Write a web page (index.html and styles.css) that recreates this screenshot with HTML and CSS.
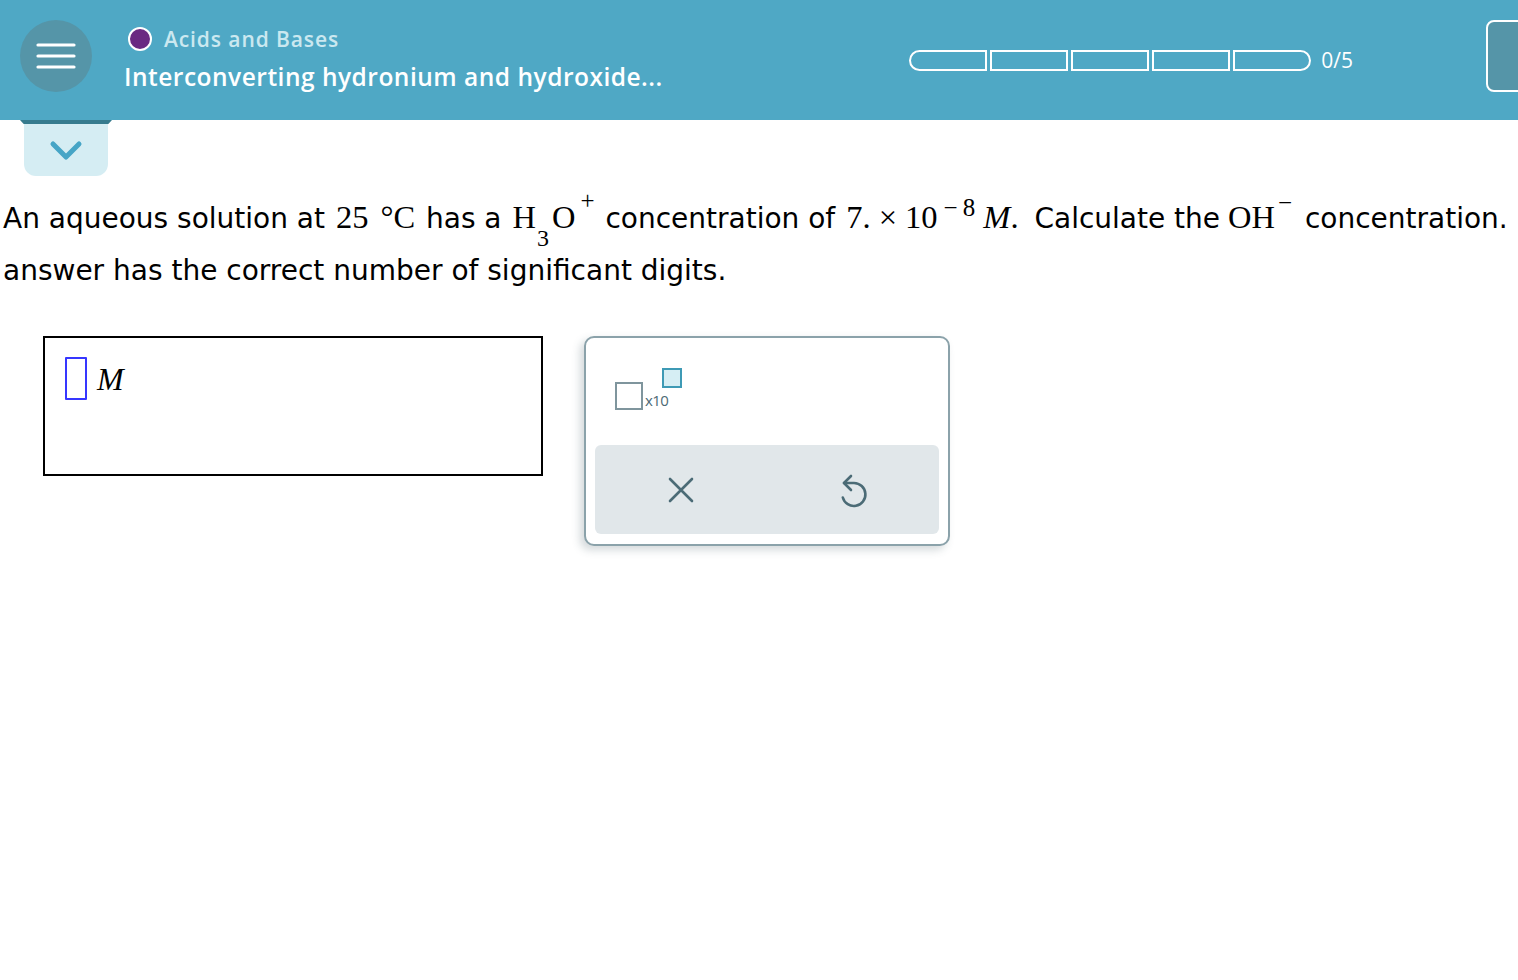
FILE: index.html
```html
<!DOCTYPE html>
<html lang="en">
<head>
<meta charset="utf-8">
<title>Interconverting hydronium and hydroxide</title>
<link rel="stylesheet" href="styles.css">
</head>
<body>
<header class="topbar">
  <button class="menu-btn" aria-label="Menu">
    <svg width="42" height="30" viewBox="0 0 42 30"><path d="M3 4H39M3 15H39M3 26H39" stroke="#fff" stroke-width="3.2" stroke-linecap="round" fill="none"/></svg>
  </button>
  <div class="titles">
    <div class="topic"><span class="dot"></span><span>Acids and Bases</span></div>
    <div class="lesson">Interconverting hydronium and hydroxide...</div>
  </div>
  <div class="progress">
    <div class="segments">
      <span class="seg first"></span><span class="seg"></span><span class="seg"></span><span class="seg"></span><span class="seg last"></span>
    </div>
    <span class="count">0/5</span>
  </div>
  <div class="side-btn"></div>
</header>

<div class="tab-area">
  <div class="tab-lip"></div>
  <div class="tab">
    <svg width="34" height="22" viewBox="0 0 34 22"><path d="M4 4L17 17L30 4" stroke="#46a5c6" stroke-width="5" stroke-linecap="round" stroke-linejoin="round" fill="none"/></svg>
  </div>
</div>

<main class="content">
  <p class="q">An aqueous solution at <span class="m">25<span class="deg">°C</span></span> has a <span class="m">H<span class="sub">3</span>O<span class="sup plus">+</span></span> concentration of <span class="m m-end">7. × 10<span class="sup exp"><span class="minus">−</span>8</span> <i>M</i>.</span> Calculate the <span class="m oh">OH<span class="sup neg">−</span></span> concentration.</p>
  <p class="q second">answer has the correct number of significant digits.</p>

  <div class="answer-row">
    <div class="answer-box">
      <span class="slot"></span>
      <span class="unit">M</span>
    </div>
    <div class="tools">
      <div class="tool-top">
        <div class="sci">
          <span class="sci-base"></span>
          <span class="sci-x">x10</span>
          <span class="sci-exp"></span>
        </div>
      </div>
      <div class="tool-bar">
        <button class="tool-btn clear" aria-label="Clear">
          <svg width="28" height="28" viewBox="0 0 28 28"><path d="M3 3L25 25M25 3L3 25" stroke="#4b6b76" stroke-width="2.6" stroke-linecap="round" fill="none"/></svg>
        </button>
        <button class="tool-btn undo" aria-label="Undo">
          <svg width="40" height="40" viewBox="0 0 40 40"><path d="M10 12H20A11.5 11.5 0 1 1 8.8 26.5" stroke="#4b6b76" stroke-width="2.6" stroke-linecap="round" stroke-linejoin="round" fill="none"/><path d="M17 5L10 12L17 19" stroke="#4b6b76" stroke-width="2.6" stroke-linecap="round" stroke-linejoin="round" fill="none"/></svg>
        </button>
      </div>
    </div>
  </div>
</main>
</body>
</html>
```

FILE: styles.css
```css
* { box-sizing: border-box; }

html, body {
  margin: 0;
  padding: 0;
  background: #fff;
  overflow: hidden;
}

body {
  width: 1518px;
  height: 980px;
  font-family: "DejaVu Sans", Verdana, sans-serif;
  color: #000;
}

/* ---------- header ---------- */
.topbar {
  height: 120px;
  background: #4fa8c5;
  display: flex;
  align-items: flex-start;
  overflow: hidden;
  font-family: "Open Sans", "Lato", sans-serif;
}

.menu-btn {
  width: 72px;
  height: 72px;
  margin: 20px 0 0 20px;
  border: none;
  border-radius: 50%;
  background: #5595a8;
  display: flex;
  align-items: center;
  justify-content: center;
  padding: 0;
  flex-shrink: 0;
}

.titles {
  margin: 26px 0 0 32px;
  display: flex;
  flex-direction: column;
}

.topic {
  display: flex;
  align-items: center;
  height: 26px;
  margin-left: 4px;
  font-size: 21px;
  font-weight: 600;
  letter-spacing: 0.9px;
  color: #cbe8f0;
}

.dot {
  width: 24px;
  height: 24px;
  border-radius: 50%;
  background: #6a2a82;
  border: 2px solid #fff;
  margin-right: 12px;
}

.lesson {
  margin-top: 8px;
  font-size: 24.5px;
  font-weight: 600;
  letter-spacing: 0.5px;
  color: #fff;
  white-space: nowrap;
}

.progress {
  margin: 46px 133px 0 auto;
  display: flex;
  align-items: center;
}

.segments {
  display: flex;
  gap: 3px;
}

.seg {
  width: 78px;
  height: 21px;
  border: 2px solid #fff;
}
.seg.first { border-radius: 11px 0 0 11px; }
.seg.last { border-radius: 0 11px 11px 0; }

.count {
  margin-left: 10px;
  color: #fff;
  font-size: 21px;
  font-weight: 400;
}

.side-btn {
  width: 72px;
  height: 72px;
  margin: 20px -40px 0 0;
  flex-shrink: 0;
  border: 2px solid #fff;
  border-radius: 8px;
  background: #5595a8;
}

/* ---------- collapse tab ---------- */
.tab-area {
  margin-left: 20px;
  width: 92px;
}

.tab-lip {
  height: 4px;
  background: #367b8e;
  clip-path: polygon(0 0, 100% 0, 96% 100%, 4% 100%);
}

.tab {
  margin-left: 4px;
  width: 84px;
  height: 52px;
  background: #d5edf3;
  border-radius: 0 0 12px 12px;
  display: flex;
  align-items: center;
  justify-content: center;
  padding-top: 2px;
}

/* ---------- question ---------- */
.content {
  padding-left: 3px;
}

.q {
  margin: 0;
  font-size: 28px;
  line-height: 52px;
  height: 52px;
  white-space: nowrap;
}
.q:first-child { margin-top: 15px; }
.q.second { margin-top: 2px; }

.m {
  font-family: "Liberation Serif", "Times New Roman", serif;
  font-size: 32.5px;
  position: relative;
  margin: 0 2px;
}

.m i { font-style: italic; }
.m.m-end { margin-right: 7px; }
.m.oh { margin-left: -1px; }

.deg { margin-left: 12px; }

.sub {
  font-size: 24px;
  position: relative;
  top: 18px;
  margin: 0 3px 0 1px;
}

.sup {
  font-size: 25px;
  position: relative;
}

.plus { top: -19px; margin-left: 5px; }
.exp { top: -12px; margin-left: 6px; }
.exp .minus { margin-right: 5px; }
.neg { top: -17px; margin-left: 3px; margin-right: 2px; }

/* ---------- answer area ---------- */
.answer-row {
  display: flex;
  align-items: flex-start;
  gap: 41px;
  margin: 39px 0 0 40px;
}

.answer-box {
  width: 500px;
  height: 140px;
  border: 2px solid #000;
  display: flex;
  align-items: flex-start;
  padding: 19px 0 0 20px;
}

.slot {
  width: 22px;
  height: 43px;
  border: 2px solid #3636ff;
  border-radius: 1px;
}

.unit {
  font-family: "Liberation Serif", "Times New Roman", serif;
  font-style: italic;
  font-size: 32px;
  margin: 4px 0 0 10px;
}

.tools {
  width: 366px;
  height: 210px;
  border: 2px solid #8ba2aa;
  border-radius: 10px;
  background: #fff;
  box-shadow: -4px 4px 8px rgba(60, 80, 90, 0.22);
  padding: 0 9px 10px 9px;
  display: flex;
  flex-direction: column;
}

.tool-top {
  height: 107px;
  padding: 30px 0 0 20px;
}

.sci {
  display: flex;
  align-items: flex-start;
}

.sci-base {
  width: 28px;
  height: 28px;
  border: 2.5px solid #7f959d;
  margin-top: 14px;
}

.sci-x {
  font-family: "Open Sans", "Lato", sans-serif;
  font-size: 15px;
  color: #4d6974;
  margin: 22px 0 0 2px;
  letter-spacing: -0.6px;
}

.sci-exp {
  width: 20px;
  height: 20px;
  border: 2.5px solid #3e9ab5;
  background: #d6eef4;
  margin-left: -6px;
}

.tool-bar {
  flex: 1;
  background: #e1e7ea;
  border-radius: 6px;
  display: flex;
  align-items: center;
  padding-left: 72px;
}

.tool-btn {
  border: none;
  background: transparent;
  padding: 0;
  display: flex;
  align-items: center;
  justify-content: center;
}

.tool-btn.undo {
  margin-left: 139px;
  margin-top: 2px;
}
```
